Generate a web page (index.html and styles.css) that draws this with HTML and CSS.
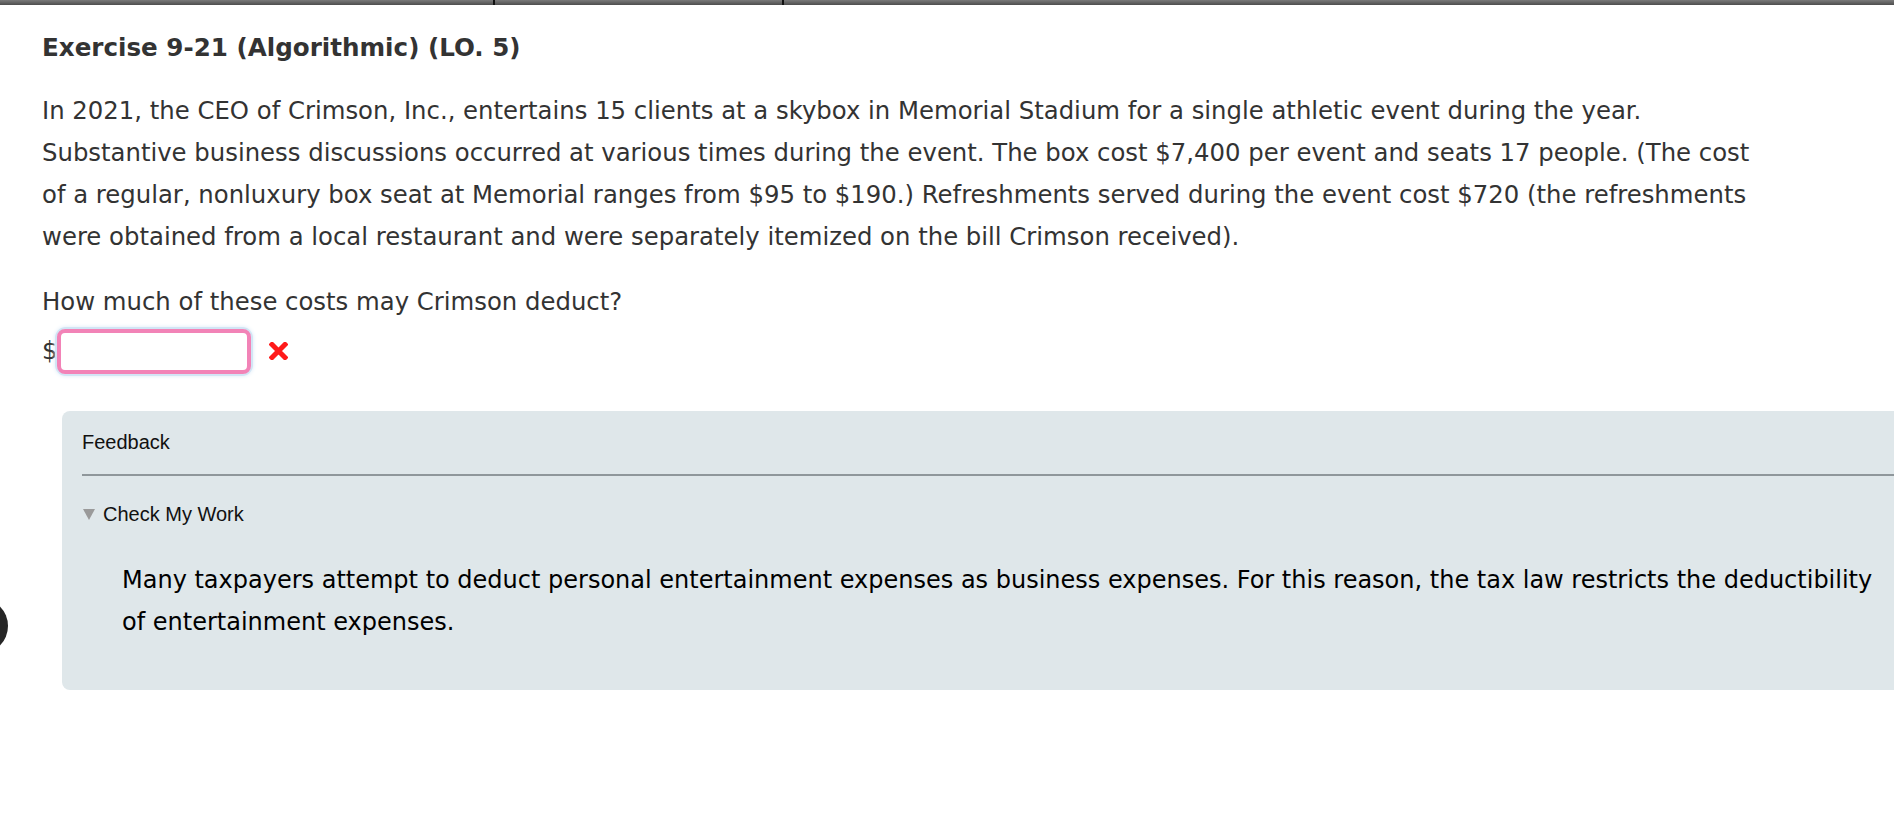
FILE: index.html
```html
<!DOCTYPE html>
<html lang="en">
<head>
<meta charset="utf-8">
<title>Exercise 9-21 (Algorithmic) (LO. 5)</title>
<link rel="stylesheet" href="styles.css">
</head>
<body>
<div class="topbar"><span class="tick tick-a"></span><span class="tick tick-b"></span></div>
<main class="content">
  <h1 class="title">Exercise 9-21 (Algorithmic) (LO. 5)</h1>
  <p class="question">In 2021, the CEO of Crimson, Inc., entertains 15 clients at a skybox in Memorial Stadium for a single athletic event during the year. Substantive business discussions occurred at various times during the event. The box cost $7,400 per event and seats 17 people. (The cost of a regular, nonluxury box seat at Memorial ranges from $95 to $190.) Refreshments served during the event cost $720 (the refreshments were obtained from a local restaurant and were separately itemized on the bill Crimson received).</p>
  <p class="ask">How much of these costs may Crimson deduct?</p>
  <div class="answer">
    <span class="dollar">$</span>
    <span class="field"><input class="input" type="text" aria-label="Amount"></span>
    <svg class="wrong" width="19" height="18" viewBox="0 0 19 18" aria-hidden="true">
      <path d="M3 2.5 L16 15.5 M16 2.5 L3 15.5" stroke="#ff1a1a" stroke-width="5" stroke-linecap="square"/>
    </svg>
  </div>
  <section class="feedback">
    <div class="fb-head">Feedback</div>
    <div class="fb-rule"></div>
    <div class="fb-toggle"><span class="tri"></span><span>Check My Work</span></div>
    <p class="fb-text">Many taxpayers attempt to deduct personal entertainment expenses as business expenses. For this reason, the tax law restricts the deductibility of entertainment expenses.</p>
  </section>
</main>
<div class="side-dot"></div>
</body>
</html>
```

FILE: styles.css
```css
html, body {
  margin: 0;
  padding: 0;
  background: #ffffff;
  overflow: hidden;
}
body {
  font-family: "DejaVu Sans", Verdana, sans-serif;
  color: #333333;
  position: relative;
  min-height: 834px;
}
.topbar {
  height: 5px;
  background: linear-gradient(#7a7a7a, #4e4e4e);
  position: relative;
}
.tick {
  position: absolute;
  top: 0;
  width: 2px;
  height: 5px;
  background: #111;
}
.tick-a { left: 493px; }
.tick-b { left: 782px; }

.content {
  padding-left: 42px;
}
.title {
  margin: 0;
  padding-top: 30px;
  font-size: 24.6px;
  line-height: 26px;
  font-weight: bold;
  color: #333333;
}
.question {
  margin: 29px 0 0 0;
  font-size: 24.35px;
  line-height: 42px;
  max-width: 1722px;
}
.ask {
  margin: 23px 0 0 0;
  font-size: 24.35px;
  line-height: 42px;
}
.answer {
  display: flex;
  align-items: center;
  height: 50px;
  margin-top: 3px;
}
.dollar {
  font-size: 24.35px;
  line-height: 28px;
  width: 15px;
}
.field {
  display: block;
  border-radius: 9px;
  box-shadow: 0 0 0 2px #d2e5f5, 0 0 4px 2px #dceaf6;
}
.input {
  display: block;
  box-sizing: border-box;
  width: 194px;
  height: 45px;
  border: 4px solid #f283b7;
  border-radius: 8px;
  background: #fff;
  outline: none;
  margin: 0;
  padding: 0 6px;
}
.wrong {
  margin-left: 18px;
  filter: blur(0.4px);
}

.feedback {
  margin-top: 35px;
  margin-left: 20px;
  margin-right: -60px;
  background: #dfe7ea;
  border-radius: 8px;
  height: 279px;
  padding: 20px 0 0 20px;
  box-sizing: border-box;
}
.fb-head {
  font-family: "Liberation Sans", Arial, sans-serif;
  font-size: 20px;
  line-height: 22px;
  color: #111;
}
.fb-rule {
  margin-top: 21px;
  height: 2px;
  background: #8f979b;
}
.fb-toggle {
  display: flex;
  align-items: center;
  gap: 8px;
  margin-top: 27px;
  font-family: "Liberation Sans", Arial, sans-serif;
  font-size: 20px;
  line-height: 22px;
  color: #111;
}
.tri {
  width: 0;
  height: 0;
  border-left: 6px solid transparent;
  border-right: 6px solid transparent;
  border-top: 11px solid #9a9a9a;
  margin-left: 1px;
}
.fb-text {
  margin: 34px 0 0 40px;
  font-size: 24px;
  line-height: 42px;
  color: #000;
  max-width: 1770px;
}
.side-dot {
  position: absolute;
  left: -48px;
  top: 598px;
  width: 56px;
  height: 56px;
  border-radius: 50%;
  background: #262626;
}
```
